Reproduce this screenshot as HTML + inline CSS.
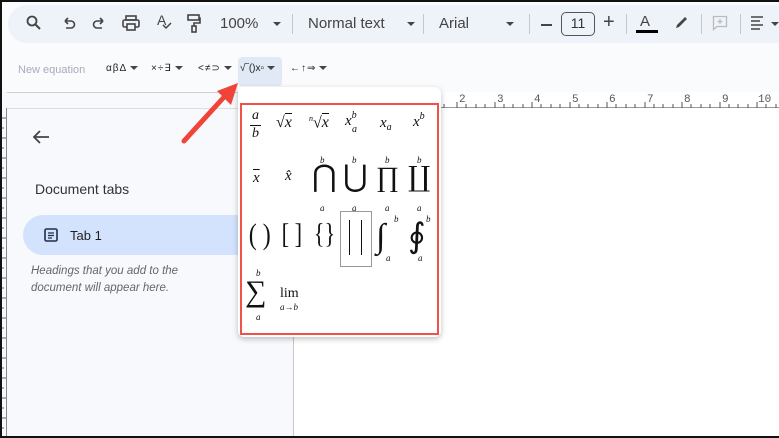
<!DOCTYPE html>
<html><head><meta charset="utf-8"><style>
*{margin:0;padding:0;box-sizing:border-box}
body{width:779px;height:438px;overflow:hidden;background:#f9fbfd;font-family:"Liberation Sans",Arial,sans-serif;position:relative;color:#444}
.frame{position:absolute;left:0;top:0;width:779px;height:438px;border:2px solid #111;border-top:none;border-right:none;pointer-events:none;z-index:50}
.frame2{position:absolute;left:0;top:0;width:779px;height:2px;background:#111;z-index:50}
.tb{position:absolute;left:8px;top:5px;width:790px;height:38px;background:#eef2f9;border-radius:19px}
.ab{position:absolute;font-size:15px;color:#444}
.sep{position:absolute;top:14px;width:1px;height:20px;background:#c7c7c7}
.eq{position:absolute;top:63px;font-size:10px;color:#222;letter-spacing:1px}
.caret{display:inline-block;width:0;height:0;border-left:4px solid transparent;border-right:4px solid transparent;border-top:4px solid #444;margin-left:3px;vertical-align:middle}
.m{position:absolute;font-family:"Liberation Serif","DejaVu Serif",serif;font-style:italic;color:#111;text-align:center}
.s{font-size:9px;font-style:italic}
</style></head><body>
<div class="frame2"></div><div class="frame"></div>
<div class="tb"></div>
<svg style="position:absolute;left:26px;top:15px" width="16" height="16" viewBox="0 0 16 16"><circle cx="6" cy="6" r="4.5" fill="none" stroke="#444" stroke-width="1.8"/><path d="M9.5 9.5L14 14" stroke="#444" stroke-width="2"/></svg>
<svg style="position:absolute;left:62px;top:16px" width="14" height="14" viewBox="0 0 14 14"><path d="M3 5h6a3.5 3.5 0 010 7H4M3 5l3-3M3 5l3 3" fill="none" stroke="#444" stroke-width="1.6"/></svg>
<svg style="position:absolute;left:92px;top:16px" width="14" height="14" viewBox="0 0 14 14"><path d="M11 5H5a3.5 3.5 0 000 7h5M11 5L8 2M11 5L8 8" fill="none" stroke="#444" stroke-width="1.6"/></svg>
<svg style="position:absolute;left:122px;top:15px" width="18" height="16" viewBox="0 0 18 16"><rect x="4" y="1" width="10" height="4" fill="none" stroke="#444" stroke-width="1.6"/><rect x="1" y="5" width="16" height="7" rx="1.5" fill="none" stroke="#444" stroke-width="1.6"/><rect x="5" y="9" width="8" height="6" fill="#eef2f9" stroke="#444" stroke-width="1.6"/></svg>
<div class="ab" style="left:157px;top:12px;font-size:14px">A</div>
<svg style="position:absolute;left:162px;top:22px" width="10" height="8"><path d="M1 3l3 3 5-5" fill="none" stroke="#444" stroke-width="1.5"/></svg>
<svg style="position:absolute;left:187px;top:14px" width="14" height="19" viewBox="0 0 14 19"><rect x="1" y="1" width="11" height="5" fill="none" stroke="#444" stroke-width="1.6"/><path d="M12 4h1v5H7v3" fill="none" stroke="#444" stroke-width="1.6"/><rect x="5" y="12" width="4" height="6" fill="none" stroke="#444" stroke-width="1.6"/></svg>
<div class="ab" style="left:220px;top:15px">100%</div><span class="caret" style="position:absolute;left:270px;top:22px"></span>
<div class="sep" style="left:292px"></div>
<div class="ab" style="left:308px;top:15px">Normal text</div><span class="caret" style="position:absolute;left:404px;top:22px"></span>
<div class="sep" style="left:423px"></div>
<div class="ab" style="left:439px;top:15px">Arial</div><span class="caret" style="position:absolute;left:503px;top:22px"></span>
<div class="sep" style="left:529px"></div>
<div style="position:absolute;left:541px;top:24px;width:11px;height:2px;background:#444"></div>
<div style="position:absolute;left:561px;top:12px;width:34px;height:24px;border:1.5px solid #555;border-radius:5px;font-size:14px;text-align:center;line-height:21px;color:#333">11</div>
<div class="ab" style="left:603px;top:11px;font-size:20px">+</div>
<div class="sep" style="left:626px"></div>
<div class="ab" style="left:640px;top:13px;font-size:15px">A</div>
<div style="position:absolute;left:636px;top:30px;width:22px;height:3px;background:#000"></div>
<svg style="position:absolute;left:674px;top:16px" width="14" height="14" viewBox="0 0 14 14"><path d="M2 12l1-3 6-6 2 2-6 6z" fill="#444"/><path d="M9 3l2-2 2 2-2 2" fill="#444"/></svg>
<div class="sep" style="left:701px"></div>
<svg style="position:absolute;left:712px;top:15px" width="16" height="16" viewBox="0 0 16 16"><path d="M1.5 1.5h13v10H5l-3.5 3z" fill="none" stroke="#bbb" stroke-width="1.3"/><path d="M8 4v5M5.5 6.5h5" stroke="#bbb" stroke-width="1.3"/></svg>
<div class="sep" style="left:740px"></div>
<svg style="position:absolute;left:751px;top:16px" width="14" height="14"><path d="M0 1h12M0 5h9M0 9h12M0 13h9" stroke="#444" stroke-width="1.6"/></svg>
<span class="caret" style="position:absolute;left:768px;top:22px"></span>

<div style="position:absolute;left:18px;top:64px;font-size:11px;color:#aab">New equation</div>
<div class="eq" style="left:106px">αβΔ<span class="caret"></span></div>
<div class="eq" style="left:151px">×÷∃<span class="caret"></span></div>
<div class="eq" style="left:198px">&lt;≠⊃<span class="caret"></span></div>
<div style="position:absolute;left:238px;top:57px;width:44px;height:29px;background:#e1e9f7;border-radius:4px"></div>
<div class="eq" style="left:240px;letter-spacing:0">√‾()x▫<span class="caret"></span></div>
<div class="eq" style="left:290px">←↑⇒<span class="caret"></span></div>

<div style="position:absolute;left:0;top:92px;width:293px;height:346px;background:#f8f9fc"></div>
<div style="position:absolute;left:7px;top:92px;width:232px;height:1px;background:#d0d0d0"></div>
<div style="position:absolute;left:7px;top:108px;width:286px;height:1px;background:#ddd"></div>
<div style="position:absolute;left:6px;top:108px;width:1px;height:330px;background:#888"></div>
<svg style="position:absolute;left:0;top:108px" width="7" height="330"><g stroke="#666" stroke-width="1">
<path d="M1 10h5M1 20h3M1 30h5M1 40h3M1 50h5M1 60h3M1 70h5M1 80h3M1 90h5M1 100h3M1 110h5M1 120h3M1 130h5M1 140h3M1 150h5M1 160h3M1 170h5M1 180h3M1 190h5M1 200h3M1 210h5M1 220h3M1 230h5M1 240h3M1 250h5M1 260h3M1 270h5M1 280h3M1 290h5M1 300h3M1 310h5M1 320h3"/></g></svg>
<div style="position:absolute;left:293px;top:108px;width:1px;height:330px;background:#c8c8c8"></div>
<div style="position:absolute;left:294px;top:108px;width:485px;height:330px;background:#fff"></div>
<svg style="position:absolute;left:32px;top:129px" width="18" height="16" viewBox="0 0 18 16"><path d="M17 8H2M8 2L2 8l6 6" fill="none" stroke="#444" stroke-width="1.8"/></svg>
<div style="position:absolute;left:35px;top:181px;font-size:14px;color:#333">Document tabs</div>
<div style="position:absolute;left:23px;top:215px;width:280px;height:40px;background:#d3e3fd;border-radius:20px"></div>
<svg style="position:absolute;left:44px;top:228px" width="14" height="14" viewBox="0 0 14 14"><rect x="1" y="1" width="12" height="12" rx="1.5" fill="none" stroke="#1f2d4d" stroke-width="1.6"/><path d="M4 5h6M4 7.5h6M4 10h4" stroke="#1f2d4d" stroke-width="1.3"/></svg>
<div style="position:absolute;left:70px;top:228px;font-size:13px;color:#1f1f1f">Tab 1</div>
<div style="position:absolute;left:31px;top:263px;font-size:11.5px;font-style:italic;color:#666;line-height:17px">Headings that you add to the<br>document will appear here.</div>

<div style="position:absolute;left:294px;top:92px;width:485px;height:16px;background:#fff;border-bottom:1px solid #999"></div>
<svg style="position:absolute;left:440px;top:92px" width="339" height="17" viewBox="0 0 339 17"><g stroke="#555" stroke-width="1"><path d="M4 12v4M17 10v6M26 12v4M36 12v4M45 12v4M55 10v6M64 12v4M73 12v4M83 12v4M92 10v6M101 12v4M111 12v4M120 12v4M130 10v6M139 12v4M148 12v4M158 12v4M167 10v6M176 12v4M186 12v4M195 12v4M205 10v6M214 12v4M223 12v4M233 12v4M242 10v6M251 12v4M261 12v4M270 12v4M280 10v6M289 12v4M298 12v4M308 12v4M317 10v6M326 12v4M336 12v4"/></g>
<g font-size="11" fill="#555" font-family="Liberation Mono,monospace"><text x="19" y="10">2</text><text x="57" y="10">3</text><text x="94" y="10">4</text><text x="132" y="10">5</text><text x="169" y="10">6</text><text x="207" y="10">7</text><text x="244" y="10">8</text><text x="282" y="10">9</text><text x="318" y="10">10</text></g></svg>

<div style="position:absolute;left:238px;top:87px;width:203px;height:250px;background:#fff;border-radius:0 6px 6px 6px;box-shadow:0 2px 6px rgba(0,0,0,.25)"></div>
<div style="position:absolute;left:240px;top:103px;width:199px;height:232px;border:2px solid #f0524a"></div>
<div class="m" style="left:250px;top:108px;font-size:14px;line-height:16px">a<br><span style="display:block;border-top:1px solid #111;width:11px;margin:1px auto 0">b</span></div>
<div class="m" style="left:276px;top:114px;font-size:16px;font-style:normal">√<span style="font-style:italic;border-top:1px solid #111">x</span></div>
<div class="m" style="left:309px;top:114px;font-size:16px;font-style:normal"><sup style="font-size:8px;font-style:italic">n</sup>√<span style="font-style:italic;border-top:1px solid #111">x</span></div>
<div class="m" style="left:345px;top:113px;font-size:15px">x<span style="position:relative;font-size:10px;top:-7px">b</span></div>
<div class="m" style="left:352px;top:124px;font-size:10px">a</div>
<div class="m" style="left:380px;top:115px;font-size:15px">x<span style="font-size:10px;position:relative;top:3px">a</span></div>
<div class="m" style="left:413px;top:114px;font-size:15px">x<span style="font-size:10px;position:relative;top:-7px">b</span></div>
<div class="m" style="left:253px;top:170px;font-size:15px;text-decoration:overline">x</div>
<div class="m" style="left:285px;top:168px;font-size:15px">x̂</div>
<div class="m s" style="left:320px;top:155px">b</div><div class="m" style="left:312px;top:162px;font-size:30px;font-style:normal;line-height:30px">⋂</div><div class="m s" style="left:320px;top:203px">a</div>
<div class="m s" style="left:352px;top:155px">b</div><div class="m" style="left:343px;top:162px;font-size:30px;font-style:normal;line-height:30px">⋃</div><div class="m s" style="left:352px;top:203px">a</div>
<div class="m s" style="left:385px;top:155px">b</div><div class="m" style="left:376px;top:163px;font-size:28px;font-style:normal;line-height:30px">∏</div><div class="m s" style="left:385px;top:203px">a</div>
<div class="m s" style="left:417px;top:155px">b</div><div class="m" style="left:408px;top:163px;font-size:28px;font-style:normal;line-height:30px">∐</div><div class="m s" style="left:417px;top:203px">a</div>
<div class="m" style="left:246px;top:219px;font-size:30px;font-style:normal;line-height:32px;transform:scaleX(.8)">( )</div>
<div class="m" style="left:279px;top:219px;font-size:28px;font-style:normal;line-height:32px;transform:scaleX(.8)">[ ]</div>
<div class="m" style="left:311px;top:219px;font-size:28px;font-style:normal;line-height:32px;transform:scaleX(.8)">{}</div>
<div style="position:absolute;left:340px;top:211px;width:32px;height:56px;border:1px solid #999"></div>
<div style="position:absolute;left:349px;top:220px;width:1px;height:35px;background:#111"></div>
<div style="position:absolute;left:361px;top:220px;width:1px;height:35px;background:#111"></div>
<div class="m" style="left:376px;top:217px;font-size:34px;line-height:40px;font-style:normal">∫</div><div class="m s" style="left:394px;top:214px">b</div><div class="m s" style="left:386px;top:253px">a</div>
<div class="m" style="left:408px;top:217px;font-size:34px;line-height:40px;font-style:normal">∮</div><div class="m s" style="left:426px;top:214px">b</div><div class="m s" style="left:418px;top:253px">a</div>
<div class="m s" style="left:256px;top:268px">b</div>
<div class="m" style="left:245px;top:276px;font-size:30px;font-style:normal;line-height:32px">∑</div>
<div class="m s" style="left:256px;top:312px">a</div>
<div class="m" style="left:280px;top:286px;font-size:14px;font-style:normal">lim</div>
<div class="m" style="left:280px;top:302px;font-size:9px">a→b</div>

<svg style="position:absolute;left:175px;top:78px" width="70" height="70" viewBox="0 0 70 70"><path d="M9 63L50 18" stroke="#f0443a" stroke-width="5" stroke-linecap="round"/><path d="M63 5L42 13L56 27z" fill="#f0443a"/></svg>
</body></html>
